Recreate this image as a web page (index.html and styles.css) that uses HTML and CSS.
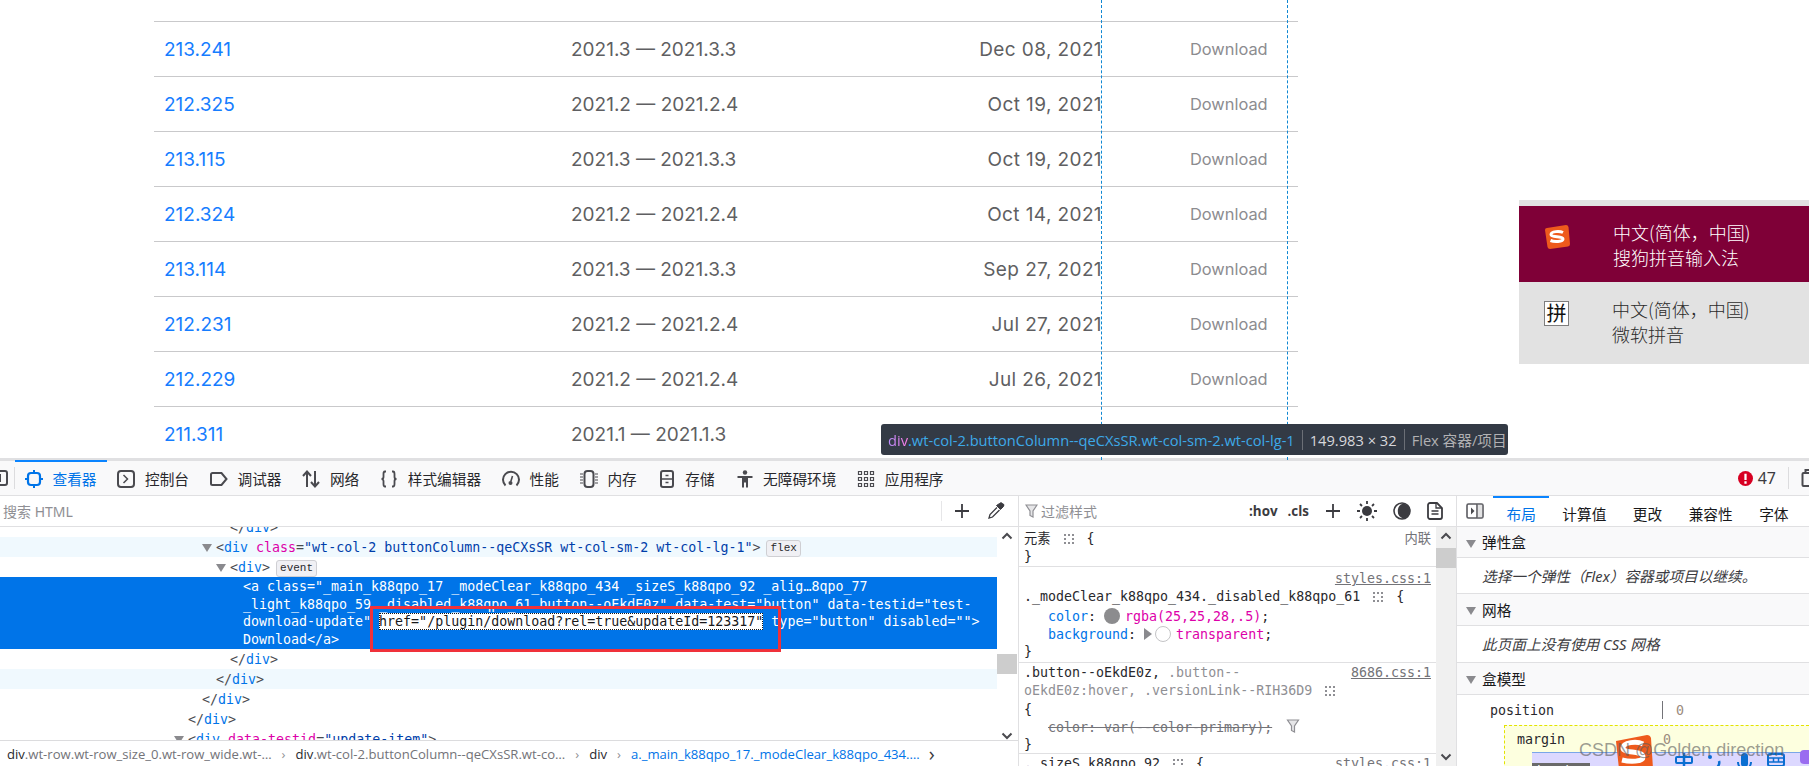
FILE: index.html
```html
<!DOCTYPE html>
<html lang="zh-CN">
<head>
<meta charset="utf-8">
<title>Plugin versions</title>
<link rel="stylesheet" href="styles.css">
</head>
<body>
<svg class="defs" width="0" height="0">
  <symbol id="dots" viewBox="0 0 12 12"><path d="M1 1h2v2H1zM5 1h2v2H5zM9 1h2v2H9zM1 5h2v2H1zM9 5h2v2H9zM1 9h2v2H1zM5 9h2v2H5zM9 9h2v2H9z" fill="#8f8f94"/></symbol>
  <symbol id="tri" viewBox="0 0 10 8"><path d="M0 0h10L5 8z" fill="#8a8a8e"/></symbol>
  <symbol id="up" viewBox="0 0 12 8"><path d="M1.5 6.5 6 2l4.500 4.500" fill="none" stroke="#4a4a4f" stroke-width="2"/></symbol>
  <symbol id="down" viewBox="0 0 12 8"><path d="M1.500 1.500 6 6l4.500-4.500" fill="none" stroke="#4a4a4f" stroke-width="2"/></symbol>
</svg>

<main class="page">
  <section class="versions">
    <div class="row"><a class="ver">213.241</a><span class="compat">2021.3 — 2021.3.3</span><span class="date">Dec 08, 2021</span><span class="dl">Download</span></div>
    <div class="row"><a class="ver">212.325</a><span class="compat">2021.2 — 2021.2.4</span><span class="date">Oct 19, 2021</span><span class="dl">Download</span></div>
    <div class="row"><a class="ver">213.115</a><span class="compat">2021.3 — 2021.3.3</span><span class="date">Oct 19, 2021</span><span class="dl">Download</span></div>
    <div class="row"><a class="ver">212.324</a><span class="compat">2021.2 — 2021.2.4</span><span class="date">Oct 14, 2021</span><span class="dl">Download</span></div>
    <div class="row"><a class="ver">213.114</a><span class="compat">2021.3 — 2021.3.3</span><span class="date">Sep 27, 2021</span><span class="dl">Download</span></div>
    <div class="row"><a class="ver">212.231</a><span class="compat">2021.2 — 2021.2.4</span><span class="date">Jul 27, 2021</span><span class="dl">Download</span></div>
    <div class="row"><a class="ver">212.229</a><span class="compat">2021.2 — 2021.2.4</span><span class="date">Jul 26, 2021</span><span class="dl">Download</span></div>
    <div class="row"><a class="ver">211.311</a><span class="compat">2021.1 — 2021.1.3</span></div>
  </section>

  <section class="devtools">
    <nav class="toolbar">
      <svg class="cut-icon" width="8" height="18" viewBox="0 0 8 18"><path d="M-4 2h9a2 2 0 0 1 2 2v10a2 2 0 0 1-2 2h-9M0 5v8" fill="none" stroke="#4a4a4f" stroke-width="2"/></svg>
      <div class="tabsep"></div>
      <div class="tab active"><svg width="18" height="18" viewBox="0 0 18 18"><rect x="3" y="3" width="12" height="12" rx="3" fill="none" stroke="#0074e8" stroke-width="2.200"/><path d="M9 0v3M9 15v3M0 9h3M15 9h3" stroke="#0074e8" stroke-width="2"/></svg><span>查看器</span></div>
      <div class="tab"><svg width="18" height="18" viewBox="0 0 18 18"><rect x="1" y="1" width="16" height="16" rx="3" fill="none" stroke="#4a4a4f" stroke-width="2"/><path d="m6.500 5 4 4-4 4" fill="none" stroke="#4a4a4f" stroke-width="1.500"/></svg><span>控制台</span></div>
      <div class="tab"><svg width="18" height="18" viewBox="0 0 18 18"><path d="M2.500 3h9l5 6-5 6h-9a1.500 1.500 0 0 1-1.500-1.500v-9A1.500 1.500 0 0 1 2.500 3z" fill="none" stroke="#4a4a4f" stroke-width="2"/></svg><span>调试器</span></div>
      <div class="tab"><svg width="18" height="18" viewBox="0 0 18 18"><path d="M5 17V2M1 6l4-4.500L9 6M13 1v15M9 12l4 4.500 4-4.500" fill="none" stroke="#4a4a4f" stroke-width="2"/></svg><span>网络</span></div>
      <div class="tab"><svg width="18" height="18" viewBox="0 0 18 18"><path d="M6 1.500H5C3.500 1.500 3.500 3 3.500 4v3C3.500 8 2.500 9 1.500 9c1 0 2 1 2 2v3c0 1 0 2.500 1.500 2.500h1M12 1.500h1c1.500 0 1.500 1.500 1.500 2.500v3c0 1 1 2 2 2-1 0-2 1-2 2v3c0 1 0 2.500-1.500 2.500h-1" fill="none" stroke="#4a4a4f" stroke-width="1.800"/></svg><span>样式编辑器</span></div>
      <div class="tab"><svg width="18" height="18" viewBox="0 0 18 18"><path d="M3.500 15.500A8 8 0 1 1 14.500 15.500" fill="none" stroke="#4a4a4f" stroke-width="2"/><path d="M10.500 6 8.800 11.500" stroke="#4a4a4f" stroke-width="1.600"/><circle cx="8.500" cy="13" r="2" fill="#4a4a4f"/></svg><span>性能</span></div>
      <div class="tab"><svg width="18" height="18" viewBox="0 0 18 18"><rect x="4.500" y="1" width="9" height="16" rx="3" fill="none" stroke="#4a4a4f" stroke-width="2"/><path d="M0 4h3M0 7h3M0 10h3M0 13h3M15 4h3M15 7h3M15 10h3M15 13h3" stroke="#4a4a4f" stroke-width="1.200"/></svg><span>内存</span></div>
      <div class="tab"><svg width="18" height="18" viewBox="0 0 18 18"><rect x="3" y="1" width="12" height="16" rx="2" fill="none" stroke="#4a4a4f" stroke-width="2"/><path d="M3 9h12M7.500 5.500h3M7.500 12.500h3" stroke="#4a4a4f" stroke-width="1.500"/></svg><span>存储</span></div>
      <div class="tab"><svg width="18" height="18" viewBox="0 0 18 18"><circle cx="9" cy="2.500" r="2.200" fill="#4a4a4f"/><path d="M1.500 6h15v2h-4.500v9.500h-2v-5h-2v5H6V8H1.500z" fill="#4a4a4f"/></svg><span>无障碍环境</span></div>
      <div class="tab"><svg width="18" height="18" viewBox="0 0 18 18"><path d="M1.500 1.500h3v3h-3zM7.500 1.500h3v3h-3zM13.500 1.500h3v3h-3zM1.500 7.500h3v3h-3zM7.500 7.500h3v3h-3zM13.500 7.500h3v3h-3zM1.500 13.500h3v3h-3zM7.500 13.500h3v3h-3zM13.500 13.500h3v3h-3z" fill="none" stroke="#4a4a4f" stroke-width="1.200"/></svg><span>应用程序</span></div>
      <div class="errs"><svg width="15" height="15" viewBox="0 0 16 16"><circle cx="8" cy="8" r="8" fill="#d70022"/><path d="M8 3v6.500M8 11v2.500" stroke="#fff" stroke-width="2.400"/></svg><span>47</span></div>
      <div class="tabsep end"></div>
      <svg class="cut-icon right" width="7" height="20" viewBox="0 0 7 20"><path d="M8 5H2a1 1 0 0 0-1 1v11a1 1 0 0 0 1 1h6M4 5V2h5" fill="none" stroke="#4a4a4f" stroke-width="2"/></svg>
    </nav>

    <div class="panes">
      <section class="pane-html">
        <header class="bar bar-html">
          <span class="search">搜索 HTML</span>
          <span class="barsep"></span>
          <svg width="16" height="16" viewBox="0 0 16 16"><path d="M8 1v14M1 8h14" stroke="#3b3b40" stroke-width="1.800"/></svg>
          <svg class="dropper" width="18" height="18" viewBox="0 0 18 18"><path d="M11 3.500 14.500 7M12.500 1.500a2 2 0 0 1 3 0 2 2 0 0 1 1 3l-3 3-4-4z" fill="#3b3b40" stroke="#3b3b40"/><path d="M10 5.500 3 12.500 2 16l3.500-1 7-7" fill="none" stroke="#3b3b40" stroke-width="1.300"/></svg>
        </header>
        <div class="body-scroll">
          <div class="tree">
            <div class="node l3 clipped">&lt;/<i>div</i>&gt;</div>
            <div class="node l2 tint"><svg class="twisty"><use href="#tri"/></svg>&lt;<i>div</i> <b>class</b>=<u>"wt-col-2 buttonColumn--qeCXsSR wt-col-sm-2 wt-col-lg-1"</u>&gt;<em class="badge">flex</em></div>
            <div class="node l3"><svg class="twisty"><use href="#tri"/></svg>&lt;<i>div</i>&gt;<em class="badge">event</em></div>
            <div class="selected">
              <div class="sel-line">&lt;a class="_main_k88qpo_17 _modeClear_k88qpo_434 _sizeS_k88qpo_92 _alig…8qpo_77</div>
              <div class="sel-line">_light_k88qpo_59 _disabled_k88qpo_61 button--oEkdE0z" data-test="button" data-testid="test-</div>
              <div class="sel-line">download-update" <span class="focus">href="/plugin/download?rel=true&amp;updateId=123317"</span> type="button" disabled=""&gt;</div>
              <div class="sel-line">Download&lt;/a&gt;</div>
              <div class="redbox"></div>
            </div>
            <div class="node l3">&lt;/<i>div</i>&gt;</div>
            <div class="node l2 tint">&lt;/<i>div</i>&gt;</div>
            <div class="node l1">&lt;/<i>div</i>&gt;</div>
            <div class="node l0">&lt;/<i>div</i>&gt;</div>
            <div class="node l0"><svg class="twisty"><use href="#tri"/></svg>&lt;<i>div</i> <b>data-testid</b>=<u>"update-item"</u>&gt;</div>
          </div>
          <div class="scrollbar wide"><svg width="12" height="8"><use href="#up"/></svg><div class="thumb t-html"></div><svg width="12" height="8"><use href="#down"/></svg></div>
        </div>
        <footer class="crumbs">
          <span class="crumb"><s>div</s>.wt-row.wt-row_size_0.wt-row_wide.wt-…</span><span class="chev">›</span>
          <span class="crumb"><s>div</s>.wt-col-2.buttonColumn--qeCXsSR.wt-co…</span><span class="chev">›</span>
          <span class="crumb"><s>div</s></span><span class="chev">›</span>
          <span class="crumb on">a._main_k88qpo_17._modeClear_k88qpo_434.…</span><span class="chev last">›</span>
        </footer>
      </section>

      <section class="pane-rules">
        <header class="bar bar-rules">
          <svg width="13" height="14" viewBox="0 0 13 14"><path d="M1 1h11L8 7v6l-3-1.500V7z" fill="#e6e6e8" stroke="#8f8f94" stroke-width="1.200"/></svg>
          <span class="filter">过滤样式</span>
          <span class="pseudo">:hov</span><span class="pseudo">.cls</span>
          <svg class="act" width="16" height="16" viewBox="0 0 16 16"><path d="M8 1v14M1 8h14" stroke="#3b3b40" stroke-width="1.800"/></svg>
          <svg class="act" width="20" height="20" viewBox="0 0 20 20"><circle cx="10" cy="10" r="5" fill="#3b3b40"/><path d="M10 0v3M10 17v3M0 10h3M17 10h3M3 3l2 2M15 15l2 2M17 3l-2 2M5 15l-2 2" stroke="#3b3b40" stroke-width="1.800"/></svg>
          <svg class="act" width="18" height="18" viewBox="0 0 18 18"><circle cx="9" cy="9" r="8" fill="none" stroke="#3b3b40" stroke-width="1.600"/><path d="M10 1.500a8 8 0 0 0 0 15 8 8 0 0 0 7-7.500 8 8 0 0 0-7-7.500z" fill="#3b3b40"/></svg>
          <svg class="act" width="16" height="18" viewBox="0 0 16 18"><path d="M3 1h7l5 5v9a2 2 0 0 1-2 2H3a2 2 0 0 1-2-2V3a2 2 0 0 1 2-2z" fill="none" stroke="#3b3b40" stroke-width="1.800"/><path d="M9 1v5h6M4.500 9h7M4.500 12h7" fill="none" stroke="#3b3b40" stroke-width="1.300"/></svg>
        </header>
        <div class="body-scroll">
          <div class="rules">
            <div class="rule r-el">
              <div class="line cjk"><span class="inline-src">内联</span>元素 <svg class="hl"><use href="#dots"/></svg> {</div>
              <div class="line">}</div>
            </div>
            <div class="rule r-mode">
              <div class="line right"><span class="src">styles.css:1</span></div>
              <div class="line">._modeClear_k88qpo_434._disabled_k88qpo_61 <svg class="hl"><use href="#dots"/></svg> {</div>
              <div class="decl first"><span class="prop">color</span>: <span class="swatch grey"></span><span class="val">rgba(25,25,28,.5)</span>;</div>
              <div class="decl"><span class="prop">background</span>: <svg class="mini-tri" width="8" height="12" viewBox="0 0 8 12"><path d="M0 0l8 6-8 6z" fill="#8a8a8e"/></svg><span class="swatch clear"></span><span class="val">transparent</span>;</div>
              <div class="line">}</div>
            </div>
            <div class="rule r-btn">
              <div class="line"><span class="src floated">8686.css:1</span>.button--oEkdE0z, <span class="dim">.button--</span></div>
              <div class="line dim">oEkdE0z:hover, .versionLink--RIH36D9 <svg class="hl"><use href="#dots"/></svg></div>
              <div class="line spaced">{</div>
              <div class="decl overridden"><span class="strike">color: var(--color-primary);</span> <svg class="fun" width="14" height="14" viewBox="0 0 13 14"><path d="M1 1h11L8 7v6l-3-1.500V7z" fill="#e6e6e8" stroke="#8f8f94" stroke-width="1.200"/></svg></div>
              <div class="line">}</div>
            </div>
            <div class="rule r-size">
              <div class="line"><span class="src floated">styles.css:1</span>._sizeS_k88qpo_92 <svg class="hl"><use href="#dots"/></svg> {</div>
            </div>
          </div>
          <div class="scrollbar"><svg width="12" height="8"><use href="#up"/></svg><div class="thumb t-rules"></div><svg width="12" height="8"><use href="#down"/></svg></div>
        </div>
      </section>

      <section class="pane-side">
        <header class="bar bar-side">
          <svg class="toggle" width="18" height="16" viewBox="0 0 18 16"><rect x="1" y="1" width="16" height="14" rx="1.500" fill="none" stroke="#5b5b60" stroke-width="1.600"/><path d="M11 1v14" stroke="#5b5b60" stroke-width="1.600"/><path d="m5 4.500 3.500 3.500L5 11.500z" fill="#4a4a4f"/><path d="M11 1h6v14h-6z" fill="#8f8f94" fill-opacity=".25"/></svg>
          <span class="stab cur">布局</span><span class="stab">计算值</span><span class="stab">更改</span><span class="stab">兼容性</span><span class="stab">字体</span>
        </header>
        <div class="acc h-flex"><svg class="tw"><use href="#tri"/></svg>弹性盒</div>
        <div class="note n-flex">选择一个弹性（Flex）容器或项目以继续。</div>
        <div class="acc"><svg class="tw"><use href="#tri"/></svg>网格</div>
        <div class="note">此页面上没有使用 CSS 网格</div>
        <div class="acc"><svg class="tw"><use href="#tri"/></svg>盒模型</div>
        <div class="boxmodel">
          <div class="bm-pos"><span class="bm-label">position</span><span class="bm-tick"></span><span class="bm-zero">0</span></div>
          <div class="bm-margin">
            <div class="bm-mtop"><span class="bm-label">margin</span><span class="bm-zero">0</span></div>
            <div class="bm-border"><span class="bm-tag">border</span></div>
          </div>
        </div>
      </section>
    </div>
  </section>
</main>

<div class="guide g1"></div>
<div class="guide g2"></div>

<div class="tooltip"><span class="tt-tag">div</span><span class="tt-cls">.wt-col-2.buttonColumn--qeCXsSR.wt-col-sm-2.wt-col-lg-1</span><span class="tt-size">149.983 × 32</span><span class="tt-kind">Flex 容器/项目</span></div>

<aside class="ime">
  <div class="ime-item cur">
    <svg width="26" height="26" viewBox="0 0 26 26"><path d="M3 4 22 1q2 0 2.500 2l1.500 17q0 2-2 2.500L6 25q-2 0-2.500-2L1 6q0-2 2-2z" fill="#ee5a1c"/><path d="M19 8.500c-3-1.500-12-1.500-12 2 0 3.500 12 1 12 4.500 0 3-9 3-12.500 1.500" fill="none" stroke="#fff" stroke-width="3"/></svg>
    <div class="ime-text">中文(简体，中国)<br>搜狗拼音输入法</div>
  </div>
  <div class="ime-item">
    <span class="ime-pin">拼</span>
    <div class="ime-text">中文(简体，中国)<br>微软拼音</div>
  </div>
</aside>

<div class="imebar">
  <svg class="s-logo" width="40" height="34" viewBox="0 0 40 34"><path d="M3 6 34 0q3 0 4 3l2 31H6z" fill="#ee5a1c"/><path d="M30 9C24 6 10 7 10 13c0 6 20 2 20 9 0 5-13 5-21 3" fill="none" stroke="#fff" stroke-width="5"/></svg>
  <svg width="18" height="16" viewBox="0 0 18 16"><rect x="1" y="4" width="16" height="6" rx="1" fill="none" stroke="#0a6ed1" stroke-width="2"/><path d="M9 0v16" stroke="#0a6ed1" stroke-width="2.500"/></svg>
  <svg class="comma" width="14" height="14" viewBox="0 0 14 14"><circle cx="2" cy="2" r="2" fill="#0a6ed1"/><path d="M11 6c1 3-1 6-3 7" fill="none" stroke="#0a6ed1" stroke-width="2.500"/></svg>
  <svg width="15" height="26" viewBox="0 0 15 26"><rect x="4" y="0" width="7" height="14" rx="3.500" fill="#0a6ed1"/><path d="M1 9c0 9 13 9 13 0M7.500 15v6" fill="none" stroke="#0a6ed1" stroke-width="2"/></svg>
  <svg width="18" height="14" viewBox="0 0 18 14"><rect x="1" y="1" width="16" height="12" rx="2" fill="none" stroke="#0a6ed1" stroke-width="2"/><path d="M1 5h16M1 9h16M6.500 5v4M11.500 5v4" stroke="#0a6ed1" stroke-width="1.500"/></svg>
  <svg class="purple" width="20" height="22" viewBox="0 0 20 22"><rect x="0" y="4" width="15" height="14" rx="4" fill="#9a6cf0"/><circle cx="17" cy="3" r="3" fill="#ff4b2b"/></svg>
</div>
<div class="watermark">CSDN @Golden direction</div>
</body>
</html>
```

FILE: styles.css
```css
* { box-sizing: border-box; }
html, body { margin: 0; height: 766px; overflow: hidden; background: #fff; }
body { position: relative; font-family: "Noto Sans", "Noto Sans CJK SC", sans-serif; color: #18181a; }
.defs { position: absolute; }
.page { display: flex; flex-direction: column; height: 766px; }

/* version table */
.versions { height: 458px; overflow: hidden; padding: 21px 0 0 154px; }
.row { width: 1144px; height: 55px; border-top: 1px solid #c9c9cb; padding-left: 10px; display: grid; grid-template-columns: 407px 1fr auto 196px; align-items: center; font-family: Inter, sans-serif; font-size: 19px; color: #5f5f62; }
.ver { color: #167dff; }
.date { letter-spacing: .4px; }
.dl { padding-left: 88px; font-size: 16.400px; color: #8c8c8f; }

/* overlay guides + tooltip */
.guide { position: absolute; top: 0; width: 0; height: 460px; border-left: 1px dashed #0f87d2; }
.g1 { left: 1101px; }
.g2 { left: 1287px; }
.tooltip { position: absolute; left: 881px; top: 424px; width: 627px; height: 31px; background: #333a45; border-radius: 3px; padding-left: 7px; display: flex; align-items: center; font-family: "Open Sans", "Noto Sans CJK SC", sans-serif; font-size: 14.670px; white-space: nowrap; }
.tt-tag { background: linear-gradient(90deg, #b98eff, #ff7de9); -webkit-background-clip: text; background-clip: text; color: transparent; }
.tt-cls { color: #3da9e8; padding-right: 7px; }
.tt-size { color: #d7d7db; border-left: 1px solid #6b6f76; padding: 0 7px; }
.tt-kind { color: #b1b1b3; border-left: 1px solid #6b6f76; padding-left: 7px; }

/* devtools */
.devtools { height: 308px; border-top: 3px solid #e0e0e2; display: flex; flex-direction: column; font-size: 14.670px; }
.toolbar { height: 35px; flex: none; background: #f9f9fa; border-bottom: 1px solid #e0e0e2; display: flex; align-items: stretch; }
.cut-icon { align-self: center; width: 8px; margin-right: 6px; }
.cut-icon.right { margin: 0 0 0 12px; }
.tabsep { width: 1px; height: 22px; align-self: center; background: #dcdcde; }
.tabsep.end { margin-left: 12px; }
.tab { display: flex; align-items: center; gap: 9.500px; padding: 0 11px 0 10px; color: #28282c; white-space: nowrap; border-top: 2px solid transparent; margin-top: -1px; }
.tab.active { color: #0074e8; border-top-color: #0a84ff; }
.tab svg { flex: none; }
.errs { margin-left: auto; display: flex; align-items: center; gap: 5px; font-size: 16px; color: #3b3b40; }

.panes { flex: 1; min-height: 0; display: grid; grid-template-columns: 1018px 438px 353px; }
.pane-html, .pane-rules, .pane-side { display: flex; flex-direction: column; min-height: 0; min-width: 0; overflow: hidden; }
.pane-rules, .pane-side { border-left: 1px solid #e0e0e2; }
.bar { height: 31px; flex: none; border-bottom: 1px solid #e0e0e2; display: flex; align-items: center; }
.body-scroll { flex: 1; min-height: 0; display: flex; }

/* html pane */
.bar-html { padding: 0 13px 0 3px; }
.search { color: #8f8f94; margin-right: auto; font-size: 14px; }
.barsep { width: 1px; height: 20px; background: #e6e6e8; margin-right: 12px; }
.dropper { margin-left: 17px; }
.tree { flex: 1; min-width: 0; overflow: hidden; font-family: "DejaVu Sans Mono", monospace; font-size: 13.300px; color: #4a4a4f; }
.node { height: 20px; line-height: 21px; position: relative; white-space: pre; }
.node.clipped { margin-top: -10px; }
.node i { font-style: normal; color: #0074e8; }
.node b { font-weight: 400; color: #dd00a9; }
.node u { text-decoration: none; color: #003eaa; }
.l0 { padding-left: 188px; }
.l1 { padding-left: 202px; }
.l2 { padding-left: 216px; }
.l3 { padding-left: 230px; }
.tint { background: #f0f9fe; }
.twisty { position: absolute; width: 10px; height: 8px; top: 7px; margin-left: -14px; }
.badge { font-style: normal; display: inline-block; margin-left: 6px; padding: 0 3px; height: 17px; line-height: 15px; font-size: 11px; color: #28282c; background: #f0f0f4; border: 1px solid #cfcfd3; border-radius: 3px; vertical-align: 1px; font-family: "Liberation Mono", monospace; }
.selected { position: relative; height: 72px; padding: 1px 0 0 243px; background: #0074e8; color: #fff; }
.sel-line { height: 17.600px; line-height: 18px; white-space: pre; }
.focus { background: #fff; color: #18181a; outline: 1px dotted #18181a; outline-offset: -1px; padding: 1px 0; }
.redbox { position: absolute; left: 370px; top: 29px; width: 411px; height: 46px; border: 3px solid #f0313a; }
.scrollbar { flex: none; width: 20px; background: #f0f0f0; display: flex; flex-direction: column; align-items: center; padding: 5px 0; }
.scrollbar svg { flex: none; }
.thumb { width: 100%; background: #cdcdcd; height: 20px; }
.scrollbar.wide { margin-right: 1px; background: #fff; padding-bottom: 0; }
.t-html { margin: 114px 0 auto; }
.t-rules { margin: 8px 0 auto; }
.crumbs { height: 26px; flex: none; border-top: 1px solid #dcdcde; display: flex; align-items: center; padding-left: 7px; font-family: "Open Sans", sans-serif; font-size: 13.100px; color: #737378; white-space: nowrap; }
.crumb s { text-decoration: none; color: #28282c; }
.crumb.on { color: #0074e8; }
.chev { margin: 0 10px; color: #8f8f94; }
.chev.last { margin-left: 9px; font-size: 20px; color: #3b3b40; }

/* rules pane */
.bar-rules { padding: 0 13px 0 6px; justify-content: flex-start; }
.filter { color: #8f8f94; margin-left: 3px; margin-right: auto; font-size: 14px; }
.pseudo { font-family: "Open Sans", sans-serif; font-weight: 700; font-size: 13.400px; margin-right: 10px; color: #3b3b40; }
.pseudo + .pseudo { margin-right: 0; }
.act { margin-left: 16px; }
.rules { flex: 1; min-width: 0; overflow: hidden; font-family: "DejaVu Sans Mono", monospace; font-size: 13.300px; color: #28282c; white-space: nowrap; }
.rule { border-bottom: 1px solid #e0e0e2; padding: 3px 5px 0 5px; }
.r-el { height: 40px; }
.r-mode { height: 96px; }
.r-btn { height: 91px; padding-top: 1px; }
.r-size { border: 0; padding-top: 1px; }
.line { height: 17.600px; line-height: 18px; }
.line.right { text-align: right; }
.line.spaced { margin-top: 2px; }
.cjk { font-family: "DejaVu Sans Mono", "Noto Sans CJK SC", monospace; }
.inline-src { float: right; color: #737378; }
.src { color: #737378; text-decoration: underline; }
.floated { float: right; }
.hl { width: 12px; height: 12px; margin: 0 4px; vertical-align: -2px; }
.decl { height: 17.600px; line-height: 18px; padding-left: 24px; }
.decl.first { margin-top: 3px; }
.prop { color: #0074e8; }
.val { color: #dd00a9; }
.dim { color: #8f8f94; }
.swatch { display: inline-block; width: 16px; height: 16px; border-radius: 50%; vertical-align: -3px; margin: 0 5px 0 0; }
.swatch.grey { background: #8c8c8e; }
.swatch.clear { background: #fff; border: 1px solid #c4c4c6; }
.mini-tri { margin-right: 3px; vertical-align: -1px; }
.strike { text-decoration: line-through; color: #737378; }
.fun { vertical-align: -1px; margin-left: 6px; }

/* side pane */
.bar-side { padding-left: 9px; background: #fff; }
.toggle { margin-right: 9px; }
.stab { height: 30px; line-height: 32px; padding: 0 13.500px; color: #18181a; border-top: 2px solid transparent; white-space: nowrap; flex: none; margin-right: -.500px; }
.stab.cur { color: #0074e8; border-top-color: #0a84ff; }
.acc { height: 32px; line-height: 32px; background: #f9f9fa; border-bottom: 1px solid #e0e0e2; padding-left: 25px; position: relative; }
.h-flex { height: 31px; line-height: 31px; }
.tw { position: absolute; left: 9px; top: 13px; width: 10px; height: 8px; }
.note { height: 37px; line-height: 36px; padding-left: 25px; font-style: italic; color: #3b3b40; background: #fff; border-bottom: 1px solid #e0e0e2; white-space: nowrap; }
.n-flex { height: 36px; }
.boxmodel { flex: 1; min-height: 0; overflow: hidden; font-family: "DejaVu Sans Mono", monospace; font-size: 13.300px; color: #28282c; }
.bm-pos { height: 30px; display: flex; align-items: center; padding-left: 33px; }
.bm-pos .bm-label { width: 172px; }
.bm-tick { width: 1px; height: 18px; background: #737378; margin-right: 13px; }
.bm-zero { color: #9b8b7d; }
.bm-margin { margin-left: 47px; height: 60px; background: #fdffdf; border: 1px dashed #e3e300; border-right: 0; padding: 0 0 0 12px; }
.bm-mtop { height: 26px; display: flex; align-items: center; }
.bm-mtop .bm-label { width: 146px; }
.bm-border { margin-left: 15px; height: 30px; background: #dcd8ff; border-top: 1px solid #7aa6e8; }
.bm-tag { display: inline-block; background: #6a6a6a; color: #fff; padding: 1px 5px; margin-top: 10px; height: 20px; width: 58px; }

/* IME popup */
.ime { position: absolute; left: 1519px; top: 200px; width: 290px; height: 164px; background: #e2e2e2; padding-top: 6px; font-family: "Noto Sans CJK SC", sans-serif; }
.ime-item { height: 79px; display: flex; align-items: flex-start; padding: 15px 0 0 25px; color: #2b2b2b; }
.ime-item.cur { height: 76px; background: #7f0037; color: #fff; padding-top: 14px; }
.ime-item svg, .ime-pin { flex: none; margin-top: 4px; margin-right: 43px; }
.ime-text { font-size: 18px; line-height: 25px; font-weight: 300; white-space: nowrap; }
.ime-pin { width: 25px; height: 25px; border: 1px solid #7d7d7d; background: #fff; font-size: 20px; line-height: 22px; text-align: center; color: #111; }

/* IME status strip + watermark */
.imebar { position: absolute; left: 1613px; top: 733px; width: 196px; height: 33px; overflow: hidden; display: flex; align-items: flex-start; }
.imebar svg { flex: none; margin-top: 20px; margin-left: 15px; }
.imebar .s-logo { margin: 2px 7px 0 0; }
.imebar .comma { margin-top: 22px; }
.imebar .purple { margin-top: 13px; }
.watermark { position: absolute; left: 1579px; top: 738px; font-family: "Liberation Sans", sans-serif; font-size: 18px; line-height: 24px; color: rgba(90, 90, 90, .6); white-space: nowrap; }
```
